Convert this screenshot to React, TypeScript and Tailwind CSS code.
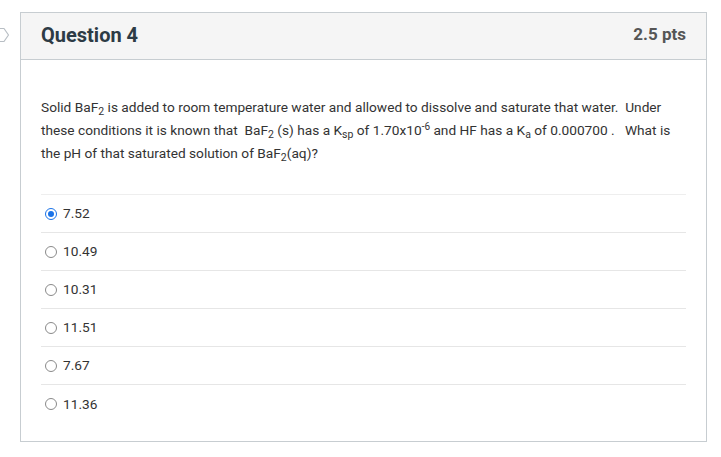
import React from "react";

const answers = ["7.52", "10.49", "10.31", "11.51", "7.67", "11.36"];

function Radio({ checked }: { checked: boolean }) {
  if (checked) {
    return (
      <span className="w-[12px] h-[12px] rounded-full border-[1.5px] border-[#1a73e8] flex items-center justify-center">
        <span className="w-[6px] h-[6px] rounded-full bg-[#1a73e8]"></span>
      </span>
    );
  }
  return <span className="w-[12px] h-[12px] rounded-full border border-[#8a8a8a] bg-white"></span>;
}

function Sub({ children }: { children: React.ReactNode }) {
  return <sub className="text-[10.5px] leading-none">{children}</sub>;
}

export default function App() {
  return (
    <div
      className="w-[721px] h-[457px] bg-white relative text-[#2d3b45]"
      style={{ fontFamily: "Roboto, 'Liberation Sans', sans-serif" }}
    >
      {/* flag marker */}
      <svg className="absolute left-[-6px] top-[27px]" width="16" height="16" viewBox="0 0 16 16">
        <path d="M1 1.5 H10 L14.5 8 L10 14.5 H1" fill="none" stroke="#b8bec4" strokeWidth="1.2" strokeLinejoin="round" />
      </svg>

      <div className="pt-3 pl-5">
        <div className="w-[687px] h-[430px] border border-[#c7cdd1] bg-white">
          {/* Header */}
          <div className="h-[47px] bg-[#f5f5f5] border-b border-[#c7cdd1] flex items-center justify-between px-5 pb-[2px]">
            <span className="text-[20px] font-bold text-[#2d3b45]">Question 4</span>
            <span className="text-[17px] font-bold text-[#555]">2.5 pts</span>
          </div>

          {/* Question */}
          <div className="px-5 pt-[36px] text-[13.7px] leading-[23px] text-[#333]">
            <p>
              Solid BaF<Sub>2</Sub> is added to room temperature water and allowed to dissolve and saturate that water.&nbsp; Under these conditions it is known that&nbsp; BaF<Sub>2</Sub> (s) has a K<Sub>sp</Sub> of 1.70x10<sup className="text-[10px] leading-none">-6</sup> and HF has a K<Sub>a</Sub> of 0.000700 .&nbsp;&nbsp; What is the pH of that saturated solution of BaF<Sub>2</Sub>(aq)?
            </p>
          </div>

          {/* Answers */}
          <div className="mx-5 mt-[29px] border-t border-[#eeeeee] divide-y divide-[#e6e6e6]">
            {answers.map((a, i) => (
              <div key={a + i} className="h-[38px] flex items-center pl-[4px] gap-[6px]">
                <Radio checked={i === 0} />
                <span className="text-[13.7px] text-[#333]">{a}</span>
              </div>
            ))}
          </div>
        </div>
      </div>
    </div>
  );
}
